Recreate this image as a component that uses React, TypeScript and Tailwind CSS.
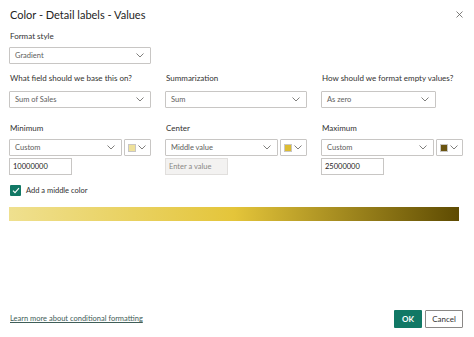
import React from "react";

const Chevron = () => (
  <svg width="8" height="5" viewBox="0 0 8 5" className="shrink-0">
    <path d="M0.5 0.5 L4 4 L7.5 0.5" fill="none" stroke="#605e5c" strokeWidth="0.8" />
  </svg>
);

const Select = ({ value, className = "" }: { value: string; className?: string }) => (
  <div className={`h-[17px] border border-[#c8c6c4] rounded-[1px] bg-white flex items-center justify-between pl-[5px] pr-[6px] ${className}`}>
    <span className="text-[7.5px] text-[#605e5c] leading-none whitespace-nowrap">{value}</span>
    <Chevron />
  </div>
);

const ColorBtn = ({ color }: { color: string }) => (
  <div className="h-[17px] w-[27px] border border-[#c8c6c4] rounded-[1px] bg-white flex items-center justify-between pl-[3px] pr-[4px] shrink-0">
    <div className="w-[8px] h-[8px] border border-[#c8c6c4]" style={{ background: color }} />
    <Chevron />
  </div>
);

const Label = ({ children }: { children: React.ReactNode }) => (
  <div className="text-[8px] text-[#323130] leading-none whitespace-nowrap">{children}</div>
);

export default function App() {
  return (
    <div className="w-[474px] h-[337px] bg-white flex flex-col pl-[9px] pr-[11px] relative" style={{ fontFamily: 'Lato, "Noto Sans", sans-serif' }}>
      <div className="absolute right-[11px] top-[11px]">
        <svg width="7" height="7" viewBox="0 0 7 7">
          <path d="M0.5 0.5 L6.5 6.5 M6.5 0.5 L0.5 6.5" stroke="#605e5c" strokeWidth="0.8" />
        </svg>
      </div>
      <div className="pt-[7px] pl-[1px] text-[11px] text-[#252423] leading-[15px]">Color - Detail labels - Values</div>
      <div className="mt-[10px] pl-[1px]"><Label>Format style</Label></div>
      <div className="mt-[7px] w-[142px]"><Select value="Gradient" /></div>

      <div className="mt-[10px] grid grid-cols-3 gap-x-[14px]">
        <div className="pl-[1px]"><Label>What field should we base this on?</Label></div>
        <div className="pl-[1px]"><Label>Summarization</Label></div>
        <div className="pl-[1px]"><Label>How should we format empty values?</Label></div>
      </div>
      <div className="mt-[9px] grid grid-cols-3 gap-x-[14px]">
        <Select value="Sum of Sales" />
        <Select value="Sum" />
        <Select value="As zero" className="w-[115px]" />
      </div>

      <div className="mt-[16px] grid grid-cols-3 gap-x-[14px]">
        <div className="pl-[1px]"><Label>Minimum</Label></div>
        <div className="pl-[1px]"><Label>Center</Label></div>
        <div className="pl-[1px]"><Label>Maximum</Label></div>
      </div>
      <div className="mt-[7px] grid grid-cols-3 gap-x-[14px]">
        <div className="flex flex-col gap-[2px]">
          <div className="flex gap-[2px]">
            <Select value="Custom" className="flex-1" />
            <ColorBtn color="#efe19a" />
          </div>
          <div className="w-[63px] h-[17px] border border-[#c8c6c4] flex items-center pl-[3px] text-[7.5px] text-[#252423]">10000000</div>
        </div>
        <div className="flex flex-col gap-[2px]">
          <div className="flex gap-[2px]">
            <Select value="Middle value" className="flex-1" />
            <ColorBtn color="#dcbc32" />
          </div>
          <div className="w-[63px] h-[17px] border border-[#e1dfdd] bg-[#f3f2f1] flex items-center pl-[3px] text-[7.5px] text-[#8a8886]">Enter a value</div>
        </div>
        <div className="flex flex-col gap-[2px]">
          <div className="flex gap-[2px]">
            <Select value="Custom" className="flex-1" />
            <ColorBtn color="#6a5410" />
          </div>
          <div className="w-[63px] h-[17px] border border-[#c8c6c4] flex items-center pl-[3px] text-[7.5px] text-[#252423]">25000000</div>
        </div>
      </div>

      <div className="mt-[10px] flex items-center gap-[5px] pl-[1px]">
        <div className="w-[11px] h-[11px] rounded-[1px] bg-[#117865] flex items-center justify-center">
          <svg width="8" height="7" viewBox="0 0 8 7">
            <path d="M1 3.6 L3 5.6 L7 1.2" fill="none" stroke="white" strokeWidth="1.1" />
          </svg>
        </div>
        <span className="text-[7.5px] text-[#323130]">Add a middle color</span>
      </div>

      <div className="mt-[11px] h-[14px] w-[450px] bg-[linear-gradient(to_right,#efe08f,#e4c53a_50%,#5e4b02)]" />

      <div className="flex-1" />
      <div className="flex items-center justify-between pb-[9px]">
        <a className="pl-[1px] text-[7.5px] text-[#3f5e58] underline">Learn more about conditional formatting</a>
        <div className="flex gap-[3px]">
          <div className="w-[28px] h-[18px] bg-[#117865] text-white text-[8px] font-bold flex items-center justify-center rounded-[1px]">OK</div>
          <div className="w-[38px] h-[18px] border border-[#8a8886] text-[#323130] text-[8px] flex items-center justify-center rounded-[1px]">Cancel</div>
        </div>
      </div>
    </div>
  );
}
